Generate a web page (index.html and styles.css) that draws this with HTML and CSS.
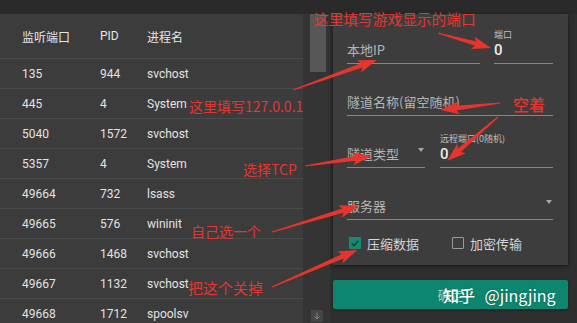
FILE: index.html
```html
<!DOCTYPE html>
<html lang="zh">
<head>
<meta charset="utf-8">
<link rel="stylesheet" href="styles.css">
</head>
<body>
<div class="screen">
  <div class="topbar"></div>
  <div class="main">
    <section class="table">
      <div class="row head"><span class="c1">监听端口</span><span class="c2">PID</span><span class="c3">进程名</span></div>
      <div class="row"><span class="c1">135</span><span class="c2">944</span><span class="c3">svchost</span></div>
      <div class="row"><span class="c1">445</span><span class="c2">4</span><span class="c3">System</span></div>
      <div class="row"><span class="c1">5040</span><span class="c2">1572</span><span class="c3">svchost</span></div>
      <div class="row"><span class="c1">5357</span><span class="c2">4</span><span class="c3">System</span></div>
      <div class="row"><span class="c1">49664</span><span class="c2">732</span><span class="c3">lsass</span></div>
      <div class="row"><span class="c1">49665</span><span class="c2">576</span><span class="c3">wininit</span></div>
      <div class="row"><span class="c1">49666</span><span class="c2">1468</span><span class="c3">svchost</span></div>
      <div class="row"><span class="c1">49667</span><span class="c2">1132</span><span class="c3">svchost</span></div>
      <div class="row"><span class="c1">49668</span><span class="c2">1712</span><span class="c3">spoolsv</span></div>
    </section>
    <div class="scroll">
      <div class="thumb"></div>
      <div class="down"><svg width="12" height="12" viewBox="0 0 12 12"><path d="M6 2.5v6M3.5 6.5 6 9l2.5-2.5" fill="none" stroke="#8a8a8a" stroke-width="1"/></svg></div>
    </div>
    <aside class="side">
      <div class="panel">
        <div class="frow">
          <div class="field ip"><span class="ph">本地IP</span></div>
          <div class="field port"><span class="lbl">端口</span><span class="val">0</span></div>
        </div>
        <div class="frow">
          <div class="field full"><span class="ph">隧道名称(留空随机)</span></div>
        </div>
        <div class="frow">
          <div class="field type sel"><span class="ph">隧道类型</span><i class="caret"></i></div>
          <div class="field rport"><span class="lbl">远程端口(0随机)</span><span class="val">0</span></div>
        </div>
        <div class="frow">
          <div class="field full sel"><span class="ph">服务器</span><i class="caret"></i></div>
        </div>
        <div class="checks">
          <label class="chk"><span class="box on"><svg width="12" height="12" viewBox="0 0 12 12"><path d="M2.6 6.2 5 8.5 9.5 3.6" fill="none" stroke="#27403a" stroke-width="1.6"/></svg></span>压缩数据</label>
          <label class="chk"><span class="box"></span>加密传输</label>
        </div>
      </div>
      <button class="ok">确定</button>
    </aside>
  </div>

  <svg class="arrows" width="577" height="323" viewBox="0 0 577 323">
    <g fill="#e8342c">
      <polygon transform="translate(293,90) rotate(-19.7)" points="0,-0.6 73,-2.3 70,-6.5 89,0 70,6.5 73,2.3 0,0.6"/>
      <polygon transform="translate(438,33) rotate(15.8)" points="0,-0.6 39,-2.3 36,-6.5 55,0 36,6.5 39,2.3 0,0.6"/>
      <polygon transform="translate(500,103) rotate(173.3)" points="0,-0.6 44,-2.3 41,-6.5 60,0 41,6.5 44,2.3 0,0.6"/>
      <polygon transform="translate(498,117) rotate(139.2)" points="0,-0.6 51,-2.3 48,-6.5 67,0 48,6.5 51,2.3 0,0.6"/>
      <polygon transform="translate(305,166) rotate(-8.6)" points="0,-0.6 51,-2.3 48,-6.5 67,0 48,6.5 51,2.3 0,0.6"/>
      <polygon transform="translate(272,232) rotate(-16.8)" points="0,-0.6 74,-2.3 71,-6.5 90,0 71,6.5 74,2.3 0,0.6"/>
      <polygon transform="translate(272,287) rotate(-23.5)" points="0,-0.6 77,-2.3 74,-6.5 93,0 74,6.5 77,2.3 0,0.6"/>
    </g>
  </svg>

  <span class="note n1">这里填写游戏显示的端口</span>
  <span class="note n2">这里填写127.0.0.1</span>
  <span class="note n3">空着</span>
  <span class="note n4">选择TCP</span>
  <span class="note n5">自己选一个</span>
  <span class="note n6">把这个关掉</span>

  <div class="watermark"><b>知乎</b> @jingjing</div>
</div>
</body>
</html>
```

FILE: styles.css
```css
* { box-sizing: border-box; margin: 0; padding: 0; }
html, body { background: #303030; }
body {
  font-family: Roboto, "Noto Sans CJK SC", sans-serif;
  width: 577px;
  height: 323px;
  overflow: hidden;
}
.screen {
  position: relative;
  width: 577px;
  height: 323px;
  overflow: hidden;
  background: #303030;
}
.topbar {
  height: 14px;
  background: #2a2a2a;
}
.main {
  display: flex;
  height: 309px;
}

/* table */
.table {
  width: 303px;
  background: #3c3c3c;
  overflow: hidden;
}
.row {
  display: flex;
  align-items: center;
  height: 30px;
  border-top: 1px solid #4b4b4b;
  font-size: 12px;
  color: #e2e2e2;
}
.row.head {
  height: 44px;
  border-top: none;
  color: #e6e6e6;
}
.c1 { width: 100px; padding-left: 22px; }
.c2 { width: 47px; }
.c3 { flex: 1; }

/* scrollbar */
.scroll {
  width: 27px;
  background: #343434;
  display: flex;
  flex-direction: column;
  justify-content: space-between;
  padding-bottom: 1px;
}
.thumb {
  margin-left: 7px;
  width: 16px;
  height: 58px;
  background: #575757;
}
.down {
  margin-left: 8px;
  width: 12px;
  height: 12px;
  background: #454545;
  display: flex;
}

/* right side */
.side {
  width: 247px;
  padding-left: 3px;
  padding-right: 9px;
  background: #2f2f2f;
  display: flex;
  flex-direction: column;
}
.panel {
  height: 251px;
  background: #3d3d3d;
  box-shadow: 0 1px 4px rgba(0, 0, 0, 0.55);
  padding: 14px 15px 0 14px;
  display: flex;
  flex-direction: column;
  gap: 16px;
  font-family: "Noto Sans CJK SC", Roboto, sans-serif;
}
.frow {
  display: flex;
  gap: 14px;
}
.field {
  position: relative;
  height: 36px;
  border-bottom: 1px solid #858585;
  display: flex;
  flex-direction: column;
  justify-content: flex-end;
  padding-bottom: 5px;
}
.field.ip { width: 133px; }
.field.port { width: 59px; }
.field.full { flex: 1; }
.field.type { width: 78px; }
.frow .field.rport { flex: 1; margin-left: 1px; }
.ph {
  font-size: 13px;
  line-height: 16px;
  color: #b4b4b4;
}
.lbl {
  font-size: 9px;
  line-height: 11px;
  margin-bottom: 2px;
  color: #bdbdbd;
}
.val {
  font-family: Roboto, sans-serif;
  font-size: 15px;
  font-weight: 500;
  line-height: 16px;
  color: #ececec;
}
.caret {
  position: absolute;
  right: 1px;
  bottom: 15px;
  width: 0;
  height: 0;
  border-left: 3.5px solid transparent;
  border-right: 3.5px solid transparent;
  border-top: 4px solid #a8a8a8;
}
.checks {
  margin-top: -3px;
  height: 20px;
  display: flex;
  align-items: center;
  padding-left: 2px;
  gap: 33px;
}
.chk {
  display: flex;
  align-items: center;
  gap: 6px;
  font-size: 13px;
  color: #d4d4d4;
}
.box {
  width: 12px;
  height: 12px;
  border: 1.5px solid #9a9a9a;
  border-radius: 1px;
  display: flex;
}
.box.on {
  border: none;
  background: #148a74;
}
.ok {
  margin-top: 15px;
  height: 29px;
  border: none;
  border-radius: 2px;
  background: #0d866f;
  color: #9fd0c4;
  font-family: "Noto Sans CJK SC", sans-serif;
  font-size: 13px;
  box-shadow: 0 1px 3px rgba(0, 0, 0, 0.4);
}

/* overlays */
.arrows {
  position: absolute;
  left: 0;
  top: 0;
  pointer-events: none;
}
.note {
  position: absolute;
  font-family: "Noto Sans CJK SC", sans-serif;
  font-size: 14px;
  line-height: 18px;
  color: #e5352e;
  white-space: nowrap;
}
.n1 { left: 314px; top: 10px; font-size: 14.7px; }
.n2 { left: 189px; top: 97px; }
.n3 { left: 513px; top: 95px; font-size: 16px; font-weight: 500; }
.n4 { left: 243px; top: 160px; }
.n5 { left: 191px; top: 222px; }
.n6 { left: 188px; top: 279px; font-size: 15px; }
.watermark {
  position: absolute;
  left: 443px;
  top: 284px;
  font-family: "Noto Sans CJK SC", sans-serif;
  font-size: 16px;
  line-height: 22px;
  color: #ffffff;
  white-space: nowrap;
  text-shadow: 0 0 2px rgba(0, 0, 0, 0.3);
}
.watermark b { font-weight: 500; margin-right: 6px; }
```
